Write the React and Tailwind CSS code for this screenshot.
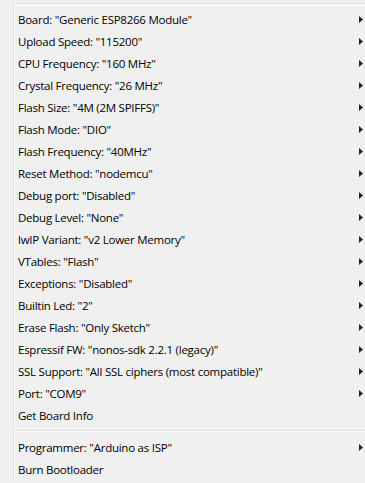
import React from 'react';

const boardItems = [
  'Board: "Generic ESP8266 Module"',
  'Upload Speed: "115200"',
  'CPU Frequency: "160 MHz"',
  'Crystal Frequency: "26 MHz"',
  'Flash Size: "4M (2M SPIFFS)"',
  'Flash Mode: "DIO"',
  'Flash Frequency: "40MHz"',
  'Reset Method: "nodemcu"',
  'Debug port: "Disabled"',
  'Debug Level: "None"',
  'lwIP Variant: "v2 Lower Memory"',
  'VTables: "Flash"',
  'Exceptions: "Disabled"',
  'Builtin Led: "2"',
  'Erase Flash: "Only Sketch"',
  'Espressif FW: "nonos-sdk 2.2.1 (legacy)"',
  'SSL Support: "All SSL ciphers (most compatible)"',
  'Port: "COM9"',
];

function Arrow() {
  return (
    <svg width="4" height="7" viewBox="0 0 4 7" className="shrink-0">
      <path d="M0 0 L4 3.5 L0 7 Z" fill="#222" />
    </svg>
  );
}

function Item({ label, sub }) {
  return (
    <div className="h-[22px] flex items-center pl-[3px] pr-[2px]">
      <span className="flex-1 pt-[2px]">{label}</span>
      {sub && <Arrow />}
    </div>
  );
}

function Separator() {
  return (
    <div className="h-[10px] flex flex-col justify-center">
      <div className="h-px bg-[#dcdcdc]" />
      <div className="h-px bg-white" />
    </div>
  );
}

export default function App() {
  return (
    <div
      className="w-[365px] h-[483px] bg-[#f0f0f0] flex text-[11.5px] tracking-[-0.25px] text-black overflow-hidden"
      style={{ fontFamily: '"Open Sans", "Noto Sans", sans-serif' }}
    >
      <div className="w-[13px] shrink-0" />
      <div className="w-px bg-[#e0e0e0] h-[480px]" />
      <div className="w-px bg-white h-[480px]" />
      <div className="flex-1 flex flex-col">
        <div className="h-[8px] flex flex-col justify-end pb-[3px] -ml-[2px]">
          <div className="h-px bg-[#dcdcdc]" />
          <div className="h-px bg-white" />
        </div>
        {boardItems.map((t) => (
          <Item key={t} label={t} sub />
        ))}
        <Item label="Get Board Info" />
        <div className="-ml-[2px]">
          <Separator />
        </div>
        <Item label='Programmer: "Arduino as ISP"' sub />
        <Item label="Burn Bootloader" />
      </div>
    </div>
  );
}
